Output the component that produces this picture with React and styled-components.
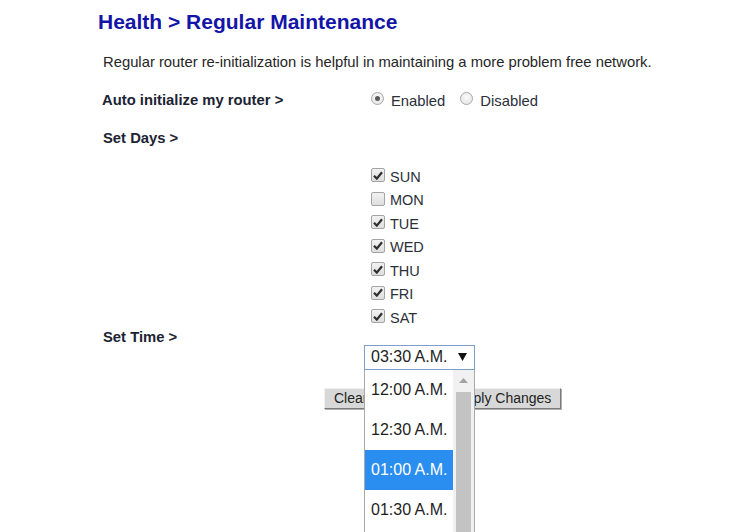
import React from 'react';
import styled, { createGlobalStyle } from 'styled-components';

const GlobalStyle = createGlobalStyle`
  html, body {
    margin: 0;
    padding: 0;
    background: #ffffff;
    font-family: "Liberation Sans", Arial, sans-serif;
  }
`;

const Page = styled.div`
  width: 755px;
  height: 532px;
  overflow: hidden;
  padding: 10px 0 0 98px;
  box-sizing: border-box;
`;

const Title = styled.h1`
  margin: 0;
  font-size: 21px;
  line-height: 24px;
  font-weight: bold;
  color: #1414a8;
`;

const Content = styled.div`
  padding-left: 5px;
`;

const Description = styled.p`
  margin: 19px 0 0 0;
  font-size: 14.8px;
  line-height: 18px;
  color: #262626;
`;

const Row = styled.div`
  display: grid;
  grid-template-columns: 268px 1fr;
  align-items: center;
  margin-top: ${(p) => p.$top || 0}px;
`;

const Label = styled.div`
  font-size: 14.8px;
  line-height: 18px;
  font-weight: bold;
  color: #1c2333;
  margin-left: ${(p) => p.$shift || 0}px;
`;

const Options = styled.div`
  display: flex;
  align-items: center;
  font-size: 14.8px;
  color: #2b2f38;
`;

const RadioItem = styled.label`
  display: flex;
  align-items: center;
  margin-right: 15px;
`;

const RadioCircle = styled.span`
  width: 13px;
  height: 13px;
  box-sizing: border-box;
  border-radius: 50%;
  border: 1px solid #a8a8a8;
  background: radial-gradient(circle at 50% 40%, #fafafa 0%, #e2e2e2 100%);
  display: flex;
  align-items: center;
  justify-content: center;
  margin: -2px 7px 0 0;

  &::after {
    content: '';
    width: 5px;
    height: 5px;
    border-radius: 50%;
    background: ${(p) => (p.$checked ? '#5a5a5a' : 'transparent')};
  }
`;

const RadioText = styled.span`
  line-height: 18px;
  margin-top: 3px;
`;

const DayList = styled.div`
  margin: 18px 0 0 268px;
  display: flex;
  flex-direction: column;
`;

const DayRow = styled.label`
  display: flex;
  align-items: center;
  height: 23.5px;
  font-size: 14.5px;
  color: #2b2f38;
`;

const Box = styled.span`
  width: 14px;
  height: 14px;
  box-sizing: border-box;
  border: 1px solid #a4a4a4;
  border-radius: 2px;
  background: linear-gradient(#f2f2f2, #dedede);
  display: flex;
  align-items: center;
  justify-content: center;
  margin: -3px 5px 0 0;
`;

const TimeArea = styled.div`
  position: relative;
  margin: -1px 0 0 261px;
  width: 111px;
`;

const Select = styled.div`
  height: 25px;
  box-sizing: border-box;
  border: 1px solid #7f9ccb;
  display: flex;
  align-items: center;
  justify-content: space-between;
  padding: 0 7px 0 6px;
  font-size: 16px;
  color: #222;
  background: #fff;
`;

const Dropdown = styled.div`
  position: absolute;
  top: 25px;
  left: 0;
  width: 111px;
  height: 170px;
  box-sizing: border-box;
  border: 1px solid #a9a9a9;
  border-top: none;
  background: #fff;
  display: flex;
  z-index: 2;
`;

const List = styled.div`
  flex: 1;
  overflow: hidden;
`;

const Item = styled.div`
  height: 40px;
  display: flex;
  align-items: center;
  padding-left: 6px;
  font-size: 16px;
  color: ${(p) => (p.$active ? '#ffffff' : '#1e1e1e')};
  background: ${(p) => (p.$active ? '#2a8ef0' : 'transparent')};
`;

const Scrollbar = styled.div`
  width: 21px;
  background: #f1f1f1;
  display: flex;
  flex-direction: column;
  align-items: center;
`;

const ArrowUp = styled.div`
  height: 22px;
  display: flex;
  align-items: center;
  justify-content: center;
`;

const Thumb = styled.div`
  flex: 1;
  width: 15px;
  background: #c3c3c3;
`;

const Buttons = styled.div`
  display: flex;
  gap: 9px;
  margin: 18px 0 0 221px;
`;

const Button = styled.button`
  height: 21px;
  padding: 0 9px;
  font-family: "Liberation Sans", Arial, sans-serif;
  font-size: 14px;
  color: #222;
  background: #d8d8d8;
  border: 1px solid;
  border-color: #f0f0f0 #7a7a7a #7a7a7a #f0f0f0;
  box-shadow: 1px 1px 0 #b0b0b0;
  line-height: 17px;
`;

const days = [
  ['SUN', true],
  ['MON', false],
  ['TUE', true],
  ['WED', true],
  ['THU', true],
  ['FRI', true],
  ['SAT', true],
];

const times = ['12:00 A.M.', '12:30 A.M.', '01:00 A.M.', '01:30 A.M.', '02:00 A.M.'];

const Check = () => (
  <svg width="10" height="9" viewBox="0 0 10 9">
    <path d="M1 4.8 L3.8 7.6 L9 1.2" fill="none" stroke="#2e2e2e" strokeWidth="2.2" />
  </svg>
);

export default function App() {
  return (
    <>
      <GlobalStyle />
      <Page>
        <Title>Health &gt; Regular Maintenance</Title>
        <Content>
          <Description>
            Regular router re-initialization is helpful in maintaining a more problem free network.
          </Description>

          <Row $top={18}>
            <Label $shift={-1}>Auto initialize my router &gt;</Label>
            <Options>
              <RadioItem>
                <RadioCircle $checked />
                <RadioText>Enabled</RadioText>
              </RadioItem>
              <RadioItem>
                <RadioCircle />
                <RadioText>Disabled</RadioText>
              </RadioItem>
            </Options>
          </Row>

          <Row $top={19}>
            <Label>Set Days &gt;</Label>
          </Row>

          <DayList>
            {days.map(([d, on]) => (
              <DayRow key={d}>
                <Box>{on && <Check />}</Box>
                {d}
              </DayRow>
            ))}
          </DayList>

          <Row $top={-2}>
            <Label>Set Time &gt;</Label>
          </Row>

          <TimeArea>
            <Select>
              <span>03:30 A.M.</span>
              <svg width="9" height="8" viewBox="0 0 9 8">
                <path d="M0 0 H9 L4.5 8 Z" fill="#111" />
              </svg>
            </Select>
            <Dropdown>
              <List>
                {times.map((t) => (
                  <Item key={t} $active={t === '01:00 A.M.'}>{t}</Item>
                ))}
              </List>
              <Scrollbar>
                <ArrowUp>
                  <svg width="9" height="5" viewBox="0 0 9 5">
                    <path d="M0 5 L4.5 0 L9 5 Z" fill="#a3a3a3" />
                  </svg>
                </ArrowUp>
                <Thumb />
              </Scrollbar>
            </Dropdown>
          </TimeArea>

          <Buttons>
            <Button>Clear Changes</Button>
            <Button>Apply Changes</Button>
          </Buttons>
        </Content>
      </Page>
    </>
  );
}
